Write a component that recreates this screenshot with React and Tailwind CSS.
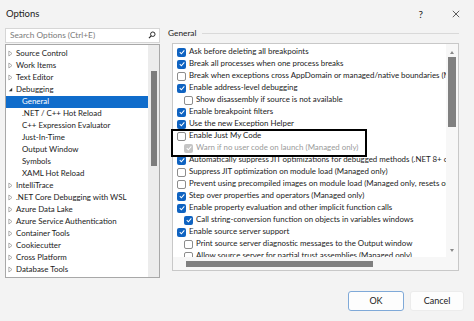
import React from "react";

const tree = [
  { label: "Source Control", kind: "closed" },
  { label: "Work Items", kind: "closed" },
  { label: "Text Editor", kind: "closed" },
  { label: "Debugging", kind: "open" },
  { label: "General", kind: "child", selected: true },
  { label: ".NET / C++ Hot Reload", kind: "child" },
  { label: "C++ Expression Evaluator", kind: "child" },
  { label: "Just-In-Time", kind: "child" },
  { label: "Output Window", kind: "child" },
  { label: "Symbols", kind: "child" },
  { label: "XAML Hot Reload", kind: "child" },
  { label: "IntelliTrace", kind: "closed" },
  { label: ".NET Core Debugging with WSL", kind: "closed" },
  { label: "Azure Data Lake", kind: "closed" },
  { label: "Azure Service Authentication", kind: "closed" },
  { label: "Container Tools", kind: "closed" },
  { label: "Cookiecutter", kind: "closed" },
  { label: "Cross Platform", kind: "closed" },
  { label: "Database Tools", kind: "closed" },
];

const options = [
  { text: "Ask before deleting all breakpoints", state: "on" },
  { text: "Break all processes when one process breaks", state: "on" },
  { text: "Break when exceptions cross AppDomain or managed/native boundaries (Managed only)", state: "off" },
  { text: "Enable address-level debugging", state: "on" },
  { text: "Show disassembly if source is not available", state: "off", indent: true },
  { text: "Enable breakpoint filters", state: "on" },
  { text: "Use the new Exception Helper", state: "on" },
  { text: "Enable Just My Code", state: "off" },
  { text: "Warn if no user code on launch (Managed only)", state: "dim", indent: true },
  { text: "Automatically suppress JIT optimizations for debugged methods (.NET 8+ only)", state: "on" },
  { text: "Suppress JIT optimization on module load (Managed only)", state: "off" },
  { text: "Prevent using precompiled images on module load (Managed only, resets on restart)", state: "off" },
  { text: "Step over properties and operators (Managed only)", state: "on" },
  { text: "Enable property evaluation and other implicit function calls", state: "on" },
  { text: "Call string-conversion function on objects in variables windows", state: "on", indent: true },
  { text: "Enable source server support", state: "on" },
  { text: "Print source server diagnostic messages to the Output window", state: "off", indent: true },
  { text: "Allow source server for partial trust assemblies (Managed only)", state: "off", indent: true },
];

function Check({ state }) {
  if (state === "off") {
    return <span className="h-[9px] w-[9px] shrink-0 rounded-[2px] border border-[#8c8c8c] bg-white" />;
  }
  return (
    <span
      className={`flex h-[9px] w-[9px] shrink-0 items-center justify-center rounded-[2px] ${
        state === "on" ? "bg-[#0f63c1]" : "bg-[#c4c4c4]"
      }`}
    >
      <svg viewBox="0 0 10 10" className="h-[8px] w-[8px]">
        <path d="M2.2 5.3 L4.2 7.2 L7.9 3" stroke="white" strokeWidth="1.3" fill="none" />
      </svg>
    </span>
  );
}

function Arrow({ kind }) {
  if (kind === "open") {
    return (
      <svg viewBox="0 0 6 6" className="h-[5px] w-[5px]">
        <path d="M5 1 L5 5 L1 5 Z" fill="#333" />
      </svg>
    );
  }
  return (
    <svg viewBox="0 0 6 8" className="h-[7px] w-[5px]">
      <path d="M1 1 L4.8 4 L1 7 Z" fill="none" stroke="#8a8a8a" strokeWidth="0.8" />
    </svg>
  );
}

export default function App() {
  return (
    <div className="flex h-[321px] w-[474px] flex-col overflow-hidden bg-[#f3f3f3] font-['Lato',sans-serif] text-[#1b1b1b]">
      <div className="flex h-[28px] items-center pl-[6px] pr-[14px] text-[9.5px]">
        <span>Options</span>
        <span className="ml-auto mr-[29px] text-[10px]">?</span>
        <svg viewBox="0 0 10 10" className="h-[8px] w-[8px]">
          <path d="M1 1 L9 9 M9 1 L1 9" stroke="#222" strokeWidth="0.9" />
        </svg>
      </div>

      <div className="flex h-[250px] pl-[5px]">
        <div className="flex w-[155px] shrink-0 flex-col">
          <div className="flex h-[15px] items-center border border-[#d6d6d6] bg-white pl-[4px] pr-[3px] text-[8.3px] text-[#7a7a7a]">
            <span>Search Options (Ctrl+E)</span>
            <svg viewBox="0 0 10 10" className="ml-auto h-[8px] w-[8px]">
              <circle cx="6" cy="4" r="2.8" stroke="#222" strokeWidth="1.2" fill="none" />
              <path d="M4 6 L1.2 8.8" stroke="#222" strokeWidth="1.4" />
            </svg>
          </div>
          <div className="mt-[1px] flex h-[235px] border border-[#a8a8a8] bg-white">
            <div className="flex min-w-0 flex-1 flex-col pt-[3px] text-[7.9px]">
              {tree.map((t) => (
                <div
                  key={t.label}
                  className={`flex h-[12px] shrink-0 items-center whitespace-nowrap ${t.selected ? "bg-[#0f6ccb] text-white" : ""} ${
                    t.kind === "child" ? "pl-[16px]" : "pl-[2px]"
                  }`}
                >
                  {t.kind !== "child" && (
                    <span className="flex w-[8px] items-center">
                      <Arrow kind={t.kind} />
                    </span>
                  )}
                  <span>{t.label}</span>
                </div>
              ))}
            </div>
            <div className="flex w-[11px] shrink-0 flex-col bg-[#ececec] pt-[26px]">
              <div className="mx-auto h-[95px] w-[6px] bg-[#7d7d7d]" />
            </div>
          </div>
        </div>

        <div className="ml-[5px] flex min-w-0 flex-1 flex-col pr-[15px]">
          <div className="flex h-[10px] items-center gap-[6px] text-[8.3px]">
            <span className="pl-[3px]">General</span>
            <span className="h-px flex-1 bg-[#d9d9d9]" />
          </div>
          <div className="relative mt-[5px] ml-[7px] flex h-[228px] flex-col border border-[#c8c8c8] bg-white">
            <div className="flex min-h-0 flex-1">
              <div className="min-w-0 flex-1 overflow-hidden pt-[2px] text-[7.9px]">
                {options.map((o) => (
                  <div
                    key={o.text}
                    className={`flex h-[12px] items-center gap-[3px] whitespace-nowrap ${o.indent ? "pl-[11px]" : "pl-[4px]"} ${
                      o.state === "dim" ? "text-[#9a9a9a]" : ""
                    }`}
                  >
                    <Check state={o.state} />
                    <span>{o.text}</span>
                  </div>
                ))}
              </div>
              <div className="flex w-[12px] shrink-0 flex-col items-center bg-[#f7f7f7]">
                <span className="mt-[7px] h-0 w-0 border-x-[2px] border-b-[3px] border-x-transparent border-b-[#888]" />
                <div className="mt-[3px] h-[70px] w-[8px] bg-[#808080]" />
                <span className="mt-auto mb-[5px] h-0 w-0 border-x-[2px] border-t-[3px] border-x-transparent border-t-[#888]" />
              </div>
            </div>
            <div className="flex h-[13px] shrink-0 items-center bg-[#f7f7f7] pl-[13px] pr-[12px]">
              <div className="h-[6px] w-[187px] bg-[#808080]" />
            </div>
            <div className="absolute left-[-2px] top-[85px] h-[28px] w-[196px] border-2 border-black" />
          </div>
        </div>
      </div>

      <div className="mt-[13px] flex justify-end gap-[6px] pr-[10px] text-[9px]">
        <button className="h-[20px] w-[56px] rounded-[3px] border border-[#7fa9d8] bg-[#fdfdfd]">OK</button>
        <button className="h-[20px] w-[54px] rounded-[3px] border border-[#ececec] bg-[#fdfdfd]">Cancel</button>
      </div>
    </div>
  );
}
